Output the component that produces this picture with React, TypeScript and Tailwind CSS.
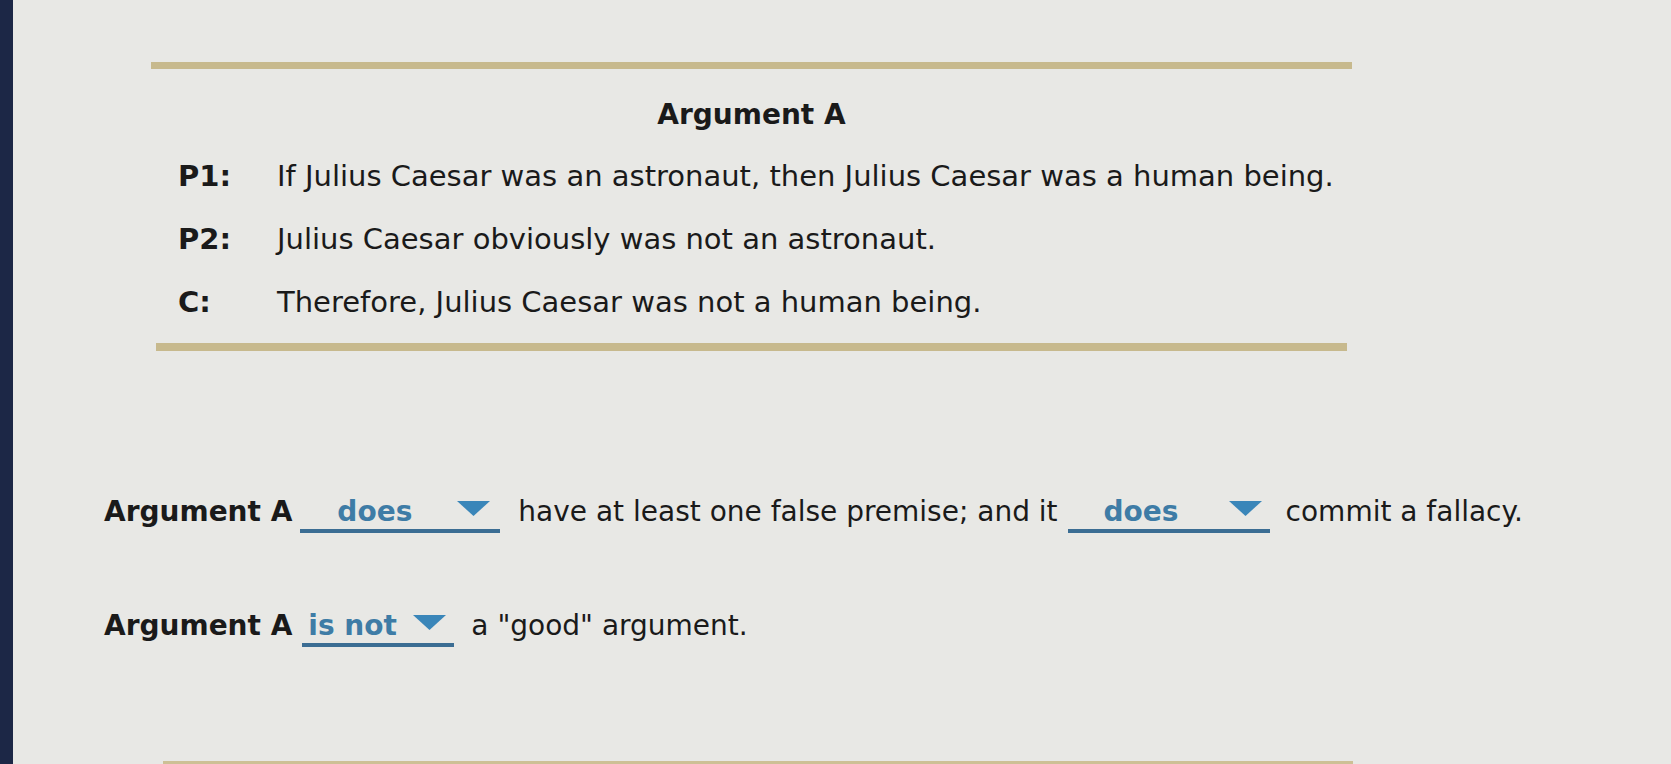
import React from 'react';

interface DropProps {
  value: string;
  width: string;
  pad: string;
}

const Triangle = () => (
  <svg width="33" height="15" viewBox="0 0 33 15" className="mt-[6px] shrink-0">
    <polygon points="0,0 33,0 16.5,15" fill="#3a86b9" />
  </svg>
);

const Dropdown: React.FC<DropProps> = ({ value, width, pad }) => (
  <span className={`flex items-start justify-between border-b-4 border-[#3b6d93] ${width} ${pad}`}>
    <span className="font-bold text-[#3e7ca6]">{value}</span>
    <Triangle />
  </span>
);

const premises = [
  { label: 'P1:', text: 'If Julius Caesar was an astronaut, then Julius Caesar was a human being.' },
  { label: 'P2:', text: 'Julius Caesar obviously was not an astronaut.' },
  { label: 'C:', text: 'Therefore, Julius Caesar was not a human being.' },
];

export default function App() {
  return (
    <div
      className="flex h-[764px] w-[1671px] overflow-hidden bg-[#e8e8e5] text-[28px] leading-[34px] text-[#1a1a1a]"
      style={{ fontFamily: '"DejaVu Sans", Verdana, sans-serif' }}
    >
      {/* dark bezel on the left */}
      <div className="w-[13px] shrink-0 bg-[#1c2746]" />

      <div className="flex flex-1 flex-col">
        {/* argument box */}
        <div className="ml-[138px] mt-[62px] w-[1201px]">
          <div className="h-[7px] bg-[#c7b98d]" />
          <h2 className="mt-[29px] text-center font-bold">Argument A</h2>
          <div className="mt-[27px] flex flex-col gap-[29px] pl-[27px] text-[29px]">
            {premises.map((p) => (
              <div key={p.label} className="flex">
                <span className="w-[99px] shrink-0 font-bold">{p.label}</span>
                <span>{p.text}</span>
              </div>
            ))}
          </div>
          <div className="mx-[5px] mt-[24px] h-[8px] bg-[#c7b98d]" />
        </div>

        {/* questions */}
        <div className="ml-[91px] mt-[144px] flex flex-col gap-[76px]">
          <div className="flex items-start">
            <span className="font-bold">Argument A</span>
            <span className="ml-[8px]">
              <Dropdown value="does" width="w-[200px]" pad="pl-[37px] pr-[10px]" />
            </span>
            <span className="ml-[18px]">have at least one false premise; and it</span>
            <span className="ml-[10px]">
              <Dropdown value="does" width="w-[202px]" pad="pl-[36px] pr-[8px]" />
            </span>
            <span className="ml-[16px]">commit a fallacy.</span>
          </div>
          <div className="flex items-start">
            <span className="font-bold">Argument A</span>
            <span className="ml-[10px]">
              <Dropdown value="is not" width="w-[152px]" pad="pl-[6px] pr-[8px]" />
            </span>
            <span className="ml-[17px]">a "good" argument.</span>
          </div>
        </div>

        <div className="mt-auto ml-[150px] h-[3px] w-[1190px] bg-[#cdc095]" />
      </div>
    </div>
  );
}
